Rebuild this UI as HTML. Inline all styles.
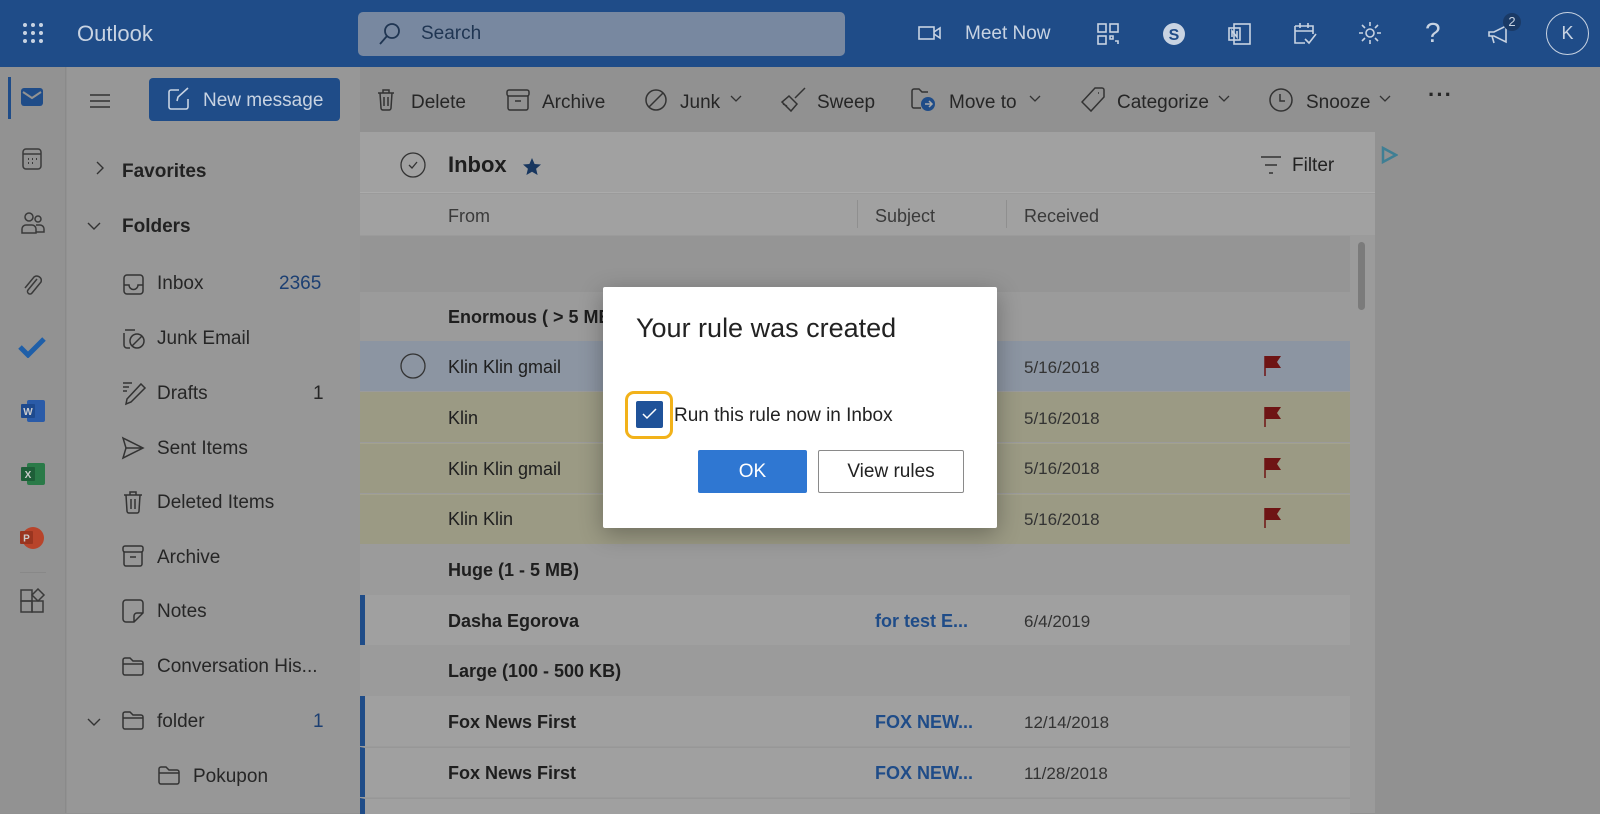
<!DOCTYPE html>
<html><head><meta charset="utf-8"><style>
*{box-sizing:border-box;margin:0;padding:0}
body{width:1600px;height:813px;overflow:hidden;font-family:"Liberation Sans",sans-serif;background:#919191;position:relative;color:#1e1e1e}
.abs{position:absolute}
.hdr{left:0;top:0;width:1600px;height:67px;background:#1f4c88;color:#c8d3e2}
.rail{left:0;top:67px;width:66px;height:746px;background:#929292;border-right:1px solid #8a8a8a}
.fp{left:67px;top:67px;width:293px;height:746px;background:#979797}
.list{left:360px;top:132px;width:1015px;height:681px;background:#9b9b9b}
.t{position:absolute;white-space:nowrap}
.row{position:absolute;left:360px;width:990px}
svg{position:absolute}
</style></head><body>
<div class="abs hdr">
 <svg style="left:22px;top:22px" width="22" height="22" viewBox="0 0 22 22" fill="#c8d3e2"><circle cx="3" cy="3" r="2"/><circle cx="11" cy="3" r="2"/><circle cx="19" cy="3" r="2"/><circle cx="3" cy="11" r="2"/><circle cx="11" cy="11" r="2"/><circle cx="19" cy="11" r="2"/><circle cx="3" cy="19" r="2"/><circle cx="11" cy="19" r="2"/><circle cx="19" cy="19" r="2"/></svg>
 <div class="t" style="left:77px;top:21px;font-size:22px;color:#c8d3e2">Outlook</div>
 <div class="abs" style="left:358px;top:12px;width:487px;height:44px;background:#7888a0;border-radius:5px"></div>
 <svg style="left:378px;top:22px" width="24" height="24" viewBox="0 0 24 24" fill="none" stroke="#1f3552" stroke-width="1.8"><circle cx="14" cy="9" r="7"/><path d="M9 14 L2 22"/></svg>
 <div class="t" style="left:421px;top:23px;font-size:19px;color:#1f3552">Search</div>
 <svg style="left:918px;top:24px" width="24" height="18" viewBox="0 0 24 18" fill="none" stroke="#c8d3e2" stroke-width="1.6"><rect x="1" y="3" width="15" height="12"/><path d="M16 8 L22 4 V14 L16 10"/></svg>
 <div class="t" style="left:965px;top:23px;font-size:19px">Meet Now</div>
 <svg style="left:1097px;top:23px" width="22" height="22" viewBox="0 0 22 22" fill="none" stroke="#c8d3e2" stroke-width="1.6"><rect x="1" y="1" width="8" height="8"/><rect x="13" y="1" width="8" height="8"/><rect x="1" y="13" width="8" height="8"/><path d="M13 13h3v3h-3zM18 18h3v3"/></svg>
 <svg style="left:1162px;top:22px" width="24" height="24" viewBox="0 0 24 24"><circle cx="12" cy="12" r="11" fill="#c8d3e2"/><text x="12" y="18" text-anchor="middle" font-size="16" font-weight="bold" fill="#1f4c88" font-family="Liberation Sans">S</text></svg>
 <svg style="left:1228px;top:22px" width="24" height="24" viewBox="0 0 24 24" fill="none" stroke="#c8d3e2" stroke-width="1.6"><rect x="6" y="2" width="16" height="20"/><rect x="1" y="6" width="11" height="12"/><path d="M4 15V9l5 6V9"/></svg>
 <svg style="left:1293px;top:21px" width="24" height="24" viewBox="0 0 24 24" fill="none" stroke="#c8d3e2" stroke-width="1.6"><path d="M2 5h18v8M2 5v17h10M2 10h18M7 2v5M15 2v5M12 18l4 4 7-9"/></svg>
 <svg style="left:1358px;top:21px" width="24" height="24" viewBox="0 0 24 24" fill="none" stroke="#c8d3e2" stroke-width="1.6"><circle cx="12" cy="12" r="4"/><path d="M12 1v4M12 19v4M1 12h4M19 12h4M4 4l3 3M17 17l3 3M4 20l3-3M17 7l3-3"/></svg>
 <div class="t" style="left:1425px;top:17px;font-size:28px;font-weight:300">?</div>
 <svg style="left:1487px;top:24px" width="26" height="20" viewBox="0 0 26 20" fill="none" stroke="#c8d3e2" stroke-width="1.6"><path d="M2 8h5l12-6v16L7 12H2zM5 12l2 7"/></svg>
 <div class="abs" style="left:1503px;top:13px;width:18px;height:18px;border-radius:9px;background:#1a3a66;color:#c8d3e2;font-size:13px;text-align:center;line-height:18px">2</div>
 <div class="abs" style="left:1546px;top:12px;width:43px;height:43px;border-radius:50%;border:1.5px solid #c8d3e2;color:#c8d3e2;text-align:center;line-height:40px;font-size:18px">K</div>
</div>

<div class="abs rail">
 <div class="abs" style="left:8px;top:10px;width:3px;height:42px;background:#1f4c88"></div>
 <svg style="left:21px;top:21px" width="22" height="18" viewBox="0 0 22 18"><rect width="22" height="18" rx="3" fill="#1f4c88"/><path d="M2 4l9 6 9-6" stroke="#929292" stroke-width="2" fill="none"/></svg>
 <svg style="left:22px;top:81px" width="20" height="22" viewBox="0 0 20 22" fill="none" stroke="#3a3a3a" stroke-width="1.5"><rect x="1" y="1" width="18" height="20" rx="3"/><path d="M1 6h18"/><path d="M6 11h1M10 11h1M14 11h1M6 15h1M10 15h1" stroke-width="2"/></svg>
 <svg style="left:21px;top:144px" width="24" height="24" viewBox="0 0 24 24" fill="none" stroke="#3a3a3a" stroke-width="1.5"><circle cx="8" cy="6" r="4"/><circle cx="17" cy="8" r="3"/><path d="M1 22v-4a4 4 0 014-4h6a4 4 0 014 4v4zM15 14h4a4 4 0 014 4v3h-8"/></svg>
 <svg style="left:22px;top:206px" width="20" height="24" viewBox="0 0 20 24" fill="none" stroke="#3a3a3a" stroke-width="1.5"><path d="M15 6L6 17a2.5 2.5 0 004 3l9-11a4.5 4.5 0 00-7-5L3 15"/></svg>
 <svg style="left:18px;top:269px" width="28" height="22" viewBox="0 0 28 22"><path d="M2 11l8 8L26 3" stroke="#1f5fa8" stroke-width="5" fill="none"/></svg>
 <svg style="left:20px;top:332px" width="26" height="24" viewBox="0 0 26 24"><rect x="7" y="1" width="18" height="22" rx="2" fill="#2a5ba8"/><rect x="1" y="5" width="14" height="14" rx="1" fill="#1e4a8e"/><text x="8" y="16" text-anchor="middle" font-size="10" font-weight="bold" fill="#ccc" font-family="Liberation Sans">W</text></svg>
 <svg style="left:20px;top:395px" width="26" height="24" viewBox="0 0 26 24"><rect x="7" y="1" width="18" height="22" rx="2" fill="#2a7a48"/><rect x="1" y="5" width="14" height="14" rx="1" fill="#1e5e38"/><text x="8" y="16" text-anchor="middle" font-size="10" font-weight="bold" fill="#ccc" font-family="Liberation Sans">X</text></svg>
 <svg style="left:19px;top:458px" width="26" height="26" viewBox="0 0 26 26"><circle cx="14" cy="13" r="11" fill="#b8442b"/><rect x="1" y="6" width="13" height="13" rx="1" fill="#9a3520"/><text x="7.5" y="16.5" text-anchor="middle" font-size="10" font-weight="bold" fill="#ccc" font-family="Liberation Sans">P</text></svg>
 <div class="abs" style="left:20px;top:505px;width:26px;height:1px;background:#888"></div>
 <svg style="left:20px;top:521px" width="26" height="26" viewBox="0 0 26 26" fill="none" stroke="#3a3a3a" stroke-width="1.5"><rect x="1" y="13" width="11" height="11"/><rect x="12" y="13" width="11" height="11"/><rect x="1" y="2" width="11" height="11"/><path d="M18 1l6 6-6 6-6-6z"/></svg>
</div>

<div class="abs fp">
 <svg style="left:24px;top:91px" width="20" height="20" viewBox="0 0 20 20"><path d="M6 4l6 6-6 6" stroke="#333" stroke-width="1.4" fill="none"/></svg>
 <div class="t" style="left:55px;top:94px;font-size:19px;font-weight:bold;color:#222">Favorites</div>
 <svg style="left:18px;top:149px" width="20" height="20" viewBox="0 0 20 20"><path d="M3 7l6 6 6-6" stroke="#333" stroke-width="1.4" fill="none"/></svg>
 <div class="t" style="left:55px;top:149px;font-size:19px;font-weight:bold;color:#222">Folders</div>
</div>
<div style="position:absolute;left:0;top:2px;font-size:19px;color:#262626">
 <svg style="left:123px;top:272px" width="21" height="21" viewBox="0 0 21 21" fill="none" stroke="#333" stroke-width="1.5"><rect x="1" y="1" width="19" height="19" rx="3"/><path d="M1 11h5a4.5 4.5 0 009 0h5"/></svg>
 <div class="t" style="left:157px;top:271px">Inbox</div><div class="t" style="left:279px;top:271px;color:#1c3f72">2365</div>
 <svg style="left:122px;top:325px" width="24" height="24" viewBox="0 0 24 24" fill="none" stroke="#333" stroke-width="1.5"><path d="M3 3h10M2 6v12a3 3 0 003 3h3"/><circle cx="15" cy="14" r="7"/><path d="M10 19l10-10"/></svg>
 <div class="t" style="left:157px;top:326px">Junk Email</div>
 <svg style="left:121px;top:379px" width="26" height="26" viewBox="0 0 26 26" fill="none" stroke="#333" stroke-width="1.5"><path d="M2 2h9M2 6h6M2 10h4M20 3l4 4-14 14-5 2 1-5z"/></svg>
 <div class="t" style="left:157px;top:381px">Drafts</div><div class="t" style="left:313px;top:381px">1</div>
 <svg style="left:121px;top:434px" width="24" height="24" viewBox="0 0 24 24" fill="none" stroke="#333" stroke-width="1.5"><path d="M2 2l20 10L2 22l3-10zM5 12h17"/></svg>
 <div class="t" style="left:157px;top:436px">Sent Items</div>
 <svg style="left:123px;top:488px" width="20" height="24" viewBox="0 0 20 24" fill="none" stroke="#333" stroke-width="1.5"><path d="M1 5h18M7 5V2h6v3M3 5l1 16a2 2 0 002 2h8a2 2 0 002-2l1-16M8 9v10M12 9v10"/></svg>
 <div class="t" style="left:157px;top:490px">Deleted Items</div>
 <svg style="left:122px;top:543px" width="22" height="22" viewBox="0 0 22 22" fill="none" stroke="#333" stroke-width="1.5"><rect x="1" y="1" width="20" height="6" rx="2"/><path d="M2 7v12a2 2 0 002 2h14a2 2 0 002-2V7M8 12h6"/></svg>
 <div class="t" style="left:157px;top:545px">Archive</div>
 <svg style="left:122px;top:597px" width="22" height="24" viewBox="0 0 22 24" fill="none" stroke="#333" stroke-width="1.5"><path d="M4 1h14a3 3 0 013 3v10l-9 9H4a3 3 0 01-3-3V4a3 3 0 013-3zM21 14h-6a3 3 0 00-3 3v6"/></svg>
 <div class="t" style="left:157px;top:599px">Notes</div>
 <svg style="left:122px;top:655px" width="22" height="19" viewBox="0 0 22 19" fill="none" stroke="#333" stroke-width="1.5"><path d="M1 3a2 2 0 012-2h5l3 3h8a2 2 0 012 2v10a2 2 0 01-2 2H3a2 2 0 01-2-2z M1 7h20"/></svg>
 <div class="t" style="left:157px;top:654px">Conversation His...</div>
 <svg style="left:85px;top:710px" width="20" height="20" viewBox="0 0 20 20"><path d="M3 7l6 6 6-6" stroke="#333" stroke-width="1.4" fill="none"/></svg>
 <svg style="left:122px;top:709px" width="22" height="19" viewBox="0 0 22 19" fill="none" stroke="#333" stroke-width="1.5"><path d="M1 3a2 2 0 012-2h5l3 3h8a2 2 0 012 2v10a2 2 0 01-2 2H3a2 2 0 01-2-2z M1 7h20"/></svg>
 <div class="t" style="left:157px;top:709px">folder</div><div class="t" style="left:313px;top:709px;color:#1c3f72">1</div>
 <svg style="left:158px;top:764px" width="22" height="19" viewBox="0 0 22 19" fill="none" stroke="#333" stroke-width="1.5"><path d="M1 3a2 2 0 012-2h5l3 3h8a2 2 0 012 2v10a2 2 0 01-2 2H3a2 2 0 01-2-2z M1 7h20"/></svg>
 <div class="t" style="left:193px;top:764px">Pokupon</div>
</div>

<div class="abs" style="left:149px;top:78px;width:191px;height:43px;background:#1f4c88;border-radius:4px;color:#c8d3e2">
 <svg style="left:18px;top:9px" width="24" height="24" viewBox="0 0 24 24" fill="none" stroke="#c8d3e2" stroke-width="1.6"><path d="M12 3H4a2 2 0 00-2 2v15a2 2 0 002 2h15a2 2 0 002-2v-8M10 14l1-4 10-9"/></svg>
 <div class="t" style="left:54px;top:12px;font-size:19px">New message</div>
</div>
<svg style="left:90px;top:94px" width="20" height="14" viewBox="0 0 20 14" stroke="#333" stroke-width="1.5"><path d="M0 1h20M0 7h20M0 13h20"/></svg>
<div style="position:absolute;left:0;top:0;font-size:19px;color:#262626">
 <svg style="left:377px;top:89px" width="18" height="22" viewBox="0 0 18 22" fill="none" stroke="#333" stroke-width="1.5"><path d="M1 4h16M6 4V1h6v3M3 4l1 15a2 2 0 002 2h6a2 2 0 002-2l1-15M7 8v9M11 8v9"/></svg>
 <div class="t" style="left:411px;top:92px">Delete</div>
 <svg style="left:506px;top:89px" width="24" height="22" viewBox="0 0 24 22" fill="none" stroke="#333" stroke-width="1.5"><rect x="1" y="1" width="22" height="6" rx="2"/><path d="M2 7v12a2 2 0 002 2h16a2 2 0 002-2V7M9 12h6"/></svg>
 <div class="t" style="left:542px;top:92px">Archive</div>
 <svg style="left:645px;top:89px" width="22" height="22" viewBox="0 0 22 22" fill="none" stroke="#333" stroke-width="1.5"><circle cx="11" cy="11" r="10"/><path d="M4 18L18 4"/></svg>
 <div class="t" style="left:680px;top:92px">Junk</div>
 <svg style="left:730px;top:95px" width="12" height="8" viewBox="0 0 12 8"><path d="M1 1l5 5 5-5" stroke="#333" stroke-width="1.3" fill="none"/></svg>
 <svg style="left:780px;top:87px" width="26" height="26" viewBox="0 0 26 26" fill="none" stroke="#333" stroke-width="1.5"><path d="M25 1L15 11M9 9l8 8-6 7-9-9z M3 17l4 2"/></svg>
 <div class="t" style="left:817px;top:92px">Sweep</div>
 <svg style="left:911px;top:87px" width="26" height="26" viewBox="0 0 26 26" fill="none" stroke="#333" stroke-width="1.5"><path d="M10 21H3a2 2 0 01-2-2V4a2 2 0 012-2h5l3 3h6"/><circle cx="17" cy="17" r="7" fill="#1f4c88" stroke="none"/><path d="M14 17h6M18 14l3 3-3 3" stroke="#aaa"/></svg>
 <div class="t" style="left:949px;top:92px">Move to</div>
 <svg style="left:1029px;top:95px" width="12" height="8" viewBox="0 0 12 8"><path d="M1 1l5 5 5-5" stroke="#333" stroke-width="1.3" fill="none"/></svg>
 <svg style="left:1081px;top:87px" width="24" height="26" viewBox="0 0 24 26" fill="none" stroke="#333" stroke-width="1.5"><path d="M14 1h7a2 2 0 012 2v7L10 24 1 15zM17 6h1"/></svg>
 <div class="t" style="left:1117px;top:92px">Categorize</div>
 <svg style="left:1218px;top:95px" width="12" height="8" viewBox="0 0 12 8"><path d="M1 1l5 5 5-5" stroke="#333" stroke-width="1.3" fill="none"/></svg>
 <svg style="left:1269px;top:88px" width="24" height="24" viewBox="0 0 24 24" fill="none" stroke="#333" stroke-width="1.5"><circle cx="12" cy="12" r="11"/><path d="M11 6v7h5"/></svg>
 <div class="t" style="left:1306px;top:92px">Snooze</div>
 <svg style="left:1379px;top:95px" width="12" height="8" viewBox="0 0 12 8"><path d="M1 1l5 5 5-5" stroke="#333" stroke-width="1.3" fill="none"/></svg>
 <div class="t" style="left:1428px;top:82px;font-size:22px;font-weight:bold;letter-spacing:1px">···</div>
</div>

<div class="abs list"></div>
<div class="abs" style="left:360px;top:132px;width:1015px;height:61px;background:#a1a1a1;border-bottom:1px solid #ababab"></div>
<div class="abs" style="left:360px;top:194px;width:1015px;height:41px;background:#a1a1a1"></div>
<div class="abs" style="left:360px;top:236px;width:990px;height:56px;background:#959595"></div>
<div class="abs" style="left:1358px;top:242px;width:7px;height:68px;border-radius:4px;background:#7b7b7b"></div>
<svg style="left:1380px;top:146px" width="18" height="18" viewBox="0 0 18 18"><path d="M3 2l13 7-13 7z" stroke="#3f7f94" stroke-width="2.5" fill="none"/></svg>
<svg style="left:400px;top:152px" width="26" height="26" viewBox="0 0 26 26" fill="none" stroke="#333" stroke-width="1.3"><circle cx="13" cy="13" r="12"/><path d="M9 13l3 3 5-6"/></svg>
<div class="t" style="left:448px;top:152px;font-size:22px;font-weight:bold;color:#1e1e1e">Inbox</div>
<svg style="left:522px;top:157px" width="20" height="20" viewBox="0 0 20 20"><path d="M10 1l2.6 6 6.4.5-4.9 4.2 1.5 6.3L10 14.7 4.4 18l1.5-6.3L1 7.5 7.4 7z" fill="#17365f"/></svg>
<svg style="left:1261px;top:156px" width="20" height="18" viewBox="0 0 20 18" stroke="#333" stroke-width="1.6"><path d="M0 1h20M4 9h12M8 17h4"/></svg>
<div class="t" style="left:1292px;top:155px;font-size:19px;color:#222">Filter</div>
<div class="t" style="left:448px;top:206px;font-size:18px;color:#3a3a3a">From</div>
<div class="abs" style="left:857px;top:200px;width:1px;height:28px;background:#8f8f8f"></div>
<div class="t" style="left:875px;top:206px;font-size:18px;color:#3a3a3a">Subject</div>
<div class="abs" style="left:1006px;top:200px;width:1px;height:28px;background:#8f8f8f"></div>
<div class="t" style="left:1024px;top:206px;font-size:18px;color:#3a3a3a">Received</div>

<div style="position:absolute;left:0;top:1px;font-size:18px;color:#1e1e1e">
 <div class="t" style="left:448px;top:306px;font-weight:bold">Enormous ( &gt; 5 MB)</div>
 <div class="row" style="top:340px;height:50px;background:#8c95a2"></div>
 <svg style="left:400px;top:352px" width="26" height="26" viewBox="0 0 26 26" fill="none" stroke="#333" stroke-width="1.3"><circle cx="13" cy="13" r="12"/></svg>
 <div class="t" style="left:448px;top:356px">Klin Klin gmail</div><div class="t" style="left:1024px;top:357px;font-size:17px;color:#333">5/16/2018</div>
 <div class="row" style="top:391px;height:50px;background:#9b9a84"></div>
 <div class="t" style="left:448px;top:407px">Klin</div><div class="t" style="left:1024px;top:408px;font-size:17px;color:#333">5/16/2018</div>
 <div class="row" style="top:442px;height:50px;background:#9b9a84;border-top:1px solid #a3a28d"></div>
 <div class="t" style="left:448px;top:458px">Klin Klin gmail</div><div class="t" style="left:1024px;top:458px;font-size:17px;color:#333">5/16/2018</div>
 <div class="row" style="top:493px;height:50px;background:#9b9a84;border-top:1px solid #a3a28d"></div>
 <div class="t" style="left:448px;top:508px">Klin Klin</div><div class="t" style="left:1024px;top:509px;font-size:17px;color:#333">5/16/2018</div>
 <svg style="left:1264px;top:354px" width="18" height="22" viewBox="0 0 18 22"><path d="M1 1v20" stroke="#6e1414" stroke-width="1.5"/><path d="M1 1h16l-4 6 4 6H1z" fill="#6e1414"/></svg>
 <svg style="left:1264px;top:405px" width="18" height="22" viewBox="0 0 18 22"><path d="M1 1v20" stroke="#6e1414" stroke-width="1.5"/><path d="M1 1h16l-4 6 4 6H1z" fill="#6e1414"/></svg>
 <svg style="left:1264px;top:456px" width="18" height="22" viewBox="0 0 18 22"><path d="M1 1v20" stroke="#6e1414" stroke-width="1.5"/><path d="M1 1h16l-4 6 4 6H1z" fill="#6e1414"/></svg>
 <svg style="left:1264px;top:506px" width="18" height="22" viewBox="0 0 18 22"><path d="M1 1v20" stroke="#6e1414" stroke-width="1.5"/><path d="M1 1h16l-4 6 4 6H1z" fill="#6e1414"/></svg>
 <div class="t" style="left:448px;top:559px;font-weight:bold">Huge (1 - 5 MB)</div>
 <div class="row" style="top:594px;height:50px;background:#a0a0a0;border-left:5px solid #1f4c88"></div>
 <div class="t" style="left:448px;top:610px;font-weight:bold">Dasha Egorova</div>
 <div class="t" style="left:875px;top:610px;font-weight:bold;color:#1f4c88">for test E...</div>
 <div class="t" style="left:1024px;top:611px;font-size:17px;color:#333">6/4/2019</div>
 <div class="t" style="left:448px;top:660px;font-weight:bold">Large (100 - 500 KB)</div>
 <div class="row" style="top:695px;height:50px;background:#a0a0a0;border-left:5px solid #1f4c88"></div>
 <div class="t" style="left:448px;top:711px;font-weight:bold">Fox News First</div>
 <div class="t" style="left:875px;top:711px;font-weight:bold;color:#1f4c88">FOX NEW...</div>
 <div class="t" style="left:1024px;top:712px;font-size:17px;color:#333">12/14/2018</div>
 <div class="row" style="top:746px;height:50px;background:#a0a0a0;border-left:5px solid #1f4c88;border-top:1px solid #979797"></div>
 <div class="t" style="left:448px;top:762px;font-weight:bold">Fox News First</div>
 <div class="t" style="left:875px;top:762px;font-weight:bold;color:#1f4c88">FOX NEW...</div>
 <div class="t" style="left:1024px;top:763px;font-size:17px;color:#333">11/28/2018</div>
 <div class="row" style="top:797px;height:16px;background:#a0a0a0;border-left:5px solid #1f4c88;border-top:1px solid #979797"></div>
</div>

<div class="abs" style="left:603px;top:287px;width:394px;height:241px;background:#fff;border-radius:2px;box-shadow:0 6px 24px rgba(0,0,0,.3)">
 <div class="t" style="left:33px;top:26px;font-size:27px;color:#222">Your rule was created</div>
 <div class="abs" style="left:22px;top:104px;width:48px;height:48px;border:3px solid #f2b21a;border-radius:9px"></div>
 <div class="abs" style="left:33px;top:114px;width:27px;height:27px;background:#1f5299;border-radius:2px"></div>
 <svg style="left:38px;top:120px" width="17" height="14" viewBox="0 0 17 14"><path d="M2 7l4 4 9-9" stroke="#fff" stroke-width="1.5" fill="none"/></svg>
 <div class="t" style="left:71px;top:118px;font-size:19px;color:#222">Run this rule now in Inbox</div>
 <div class="abs" style="left:95px;top:163px;width:109px;height:43px;background:#2f77d2;border-radius:2px;color:#fff;font-size:19px;text-align:center;line-height:43px">OK</div>
 <div class="abs" style="left:215px;top:163px;width:146px;height:43px;border:1px solid #8a8a8a;border-radius:2px;color:#222;font-size:19px;text-align:center;line-height:41px">View rules</div>
</div>
</body></html>
